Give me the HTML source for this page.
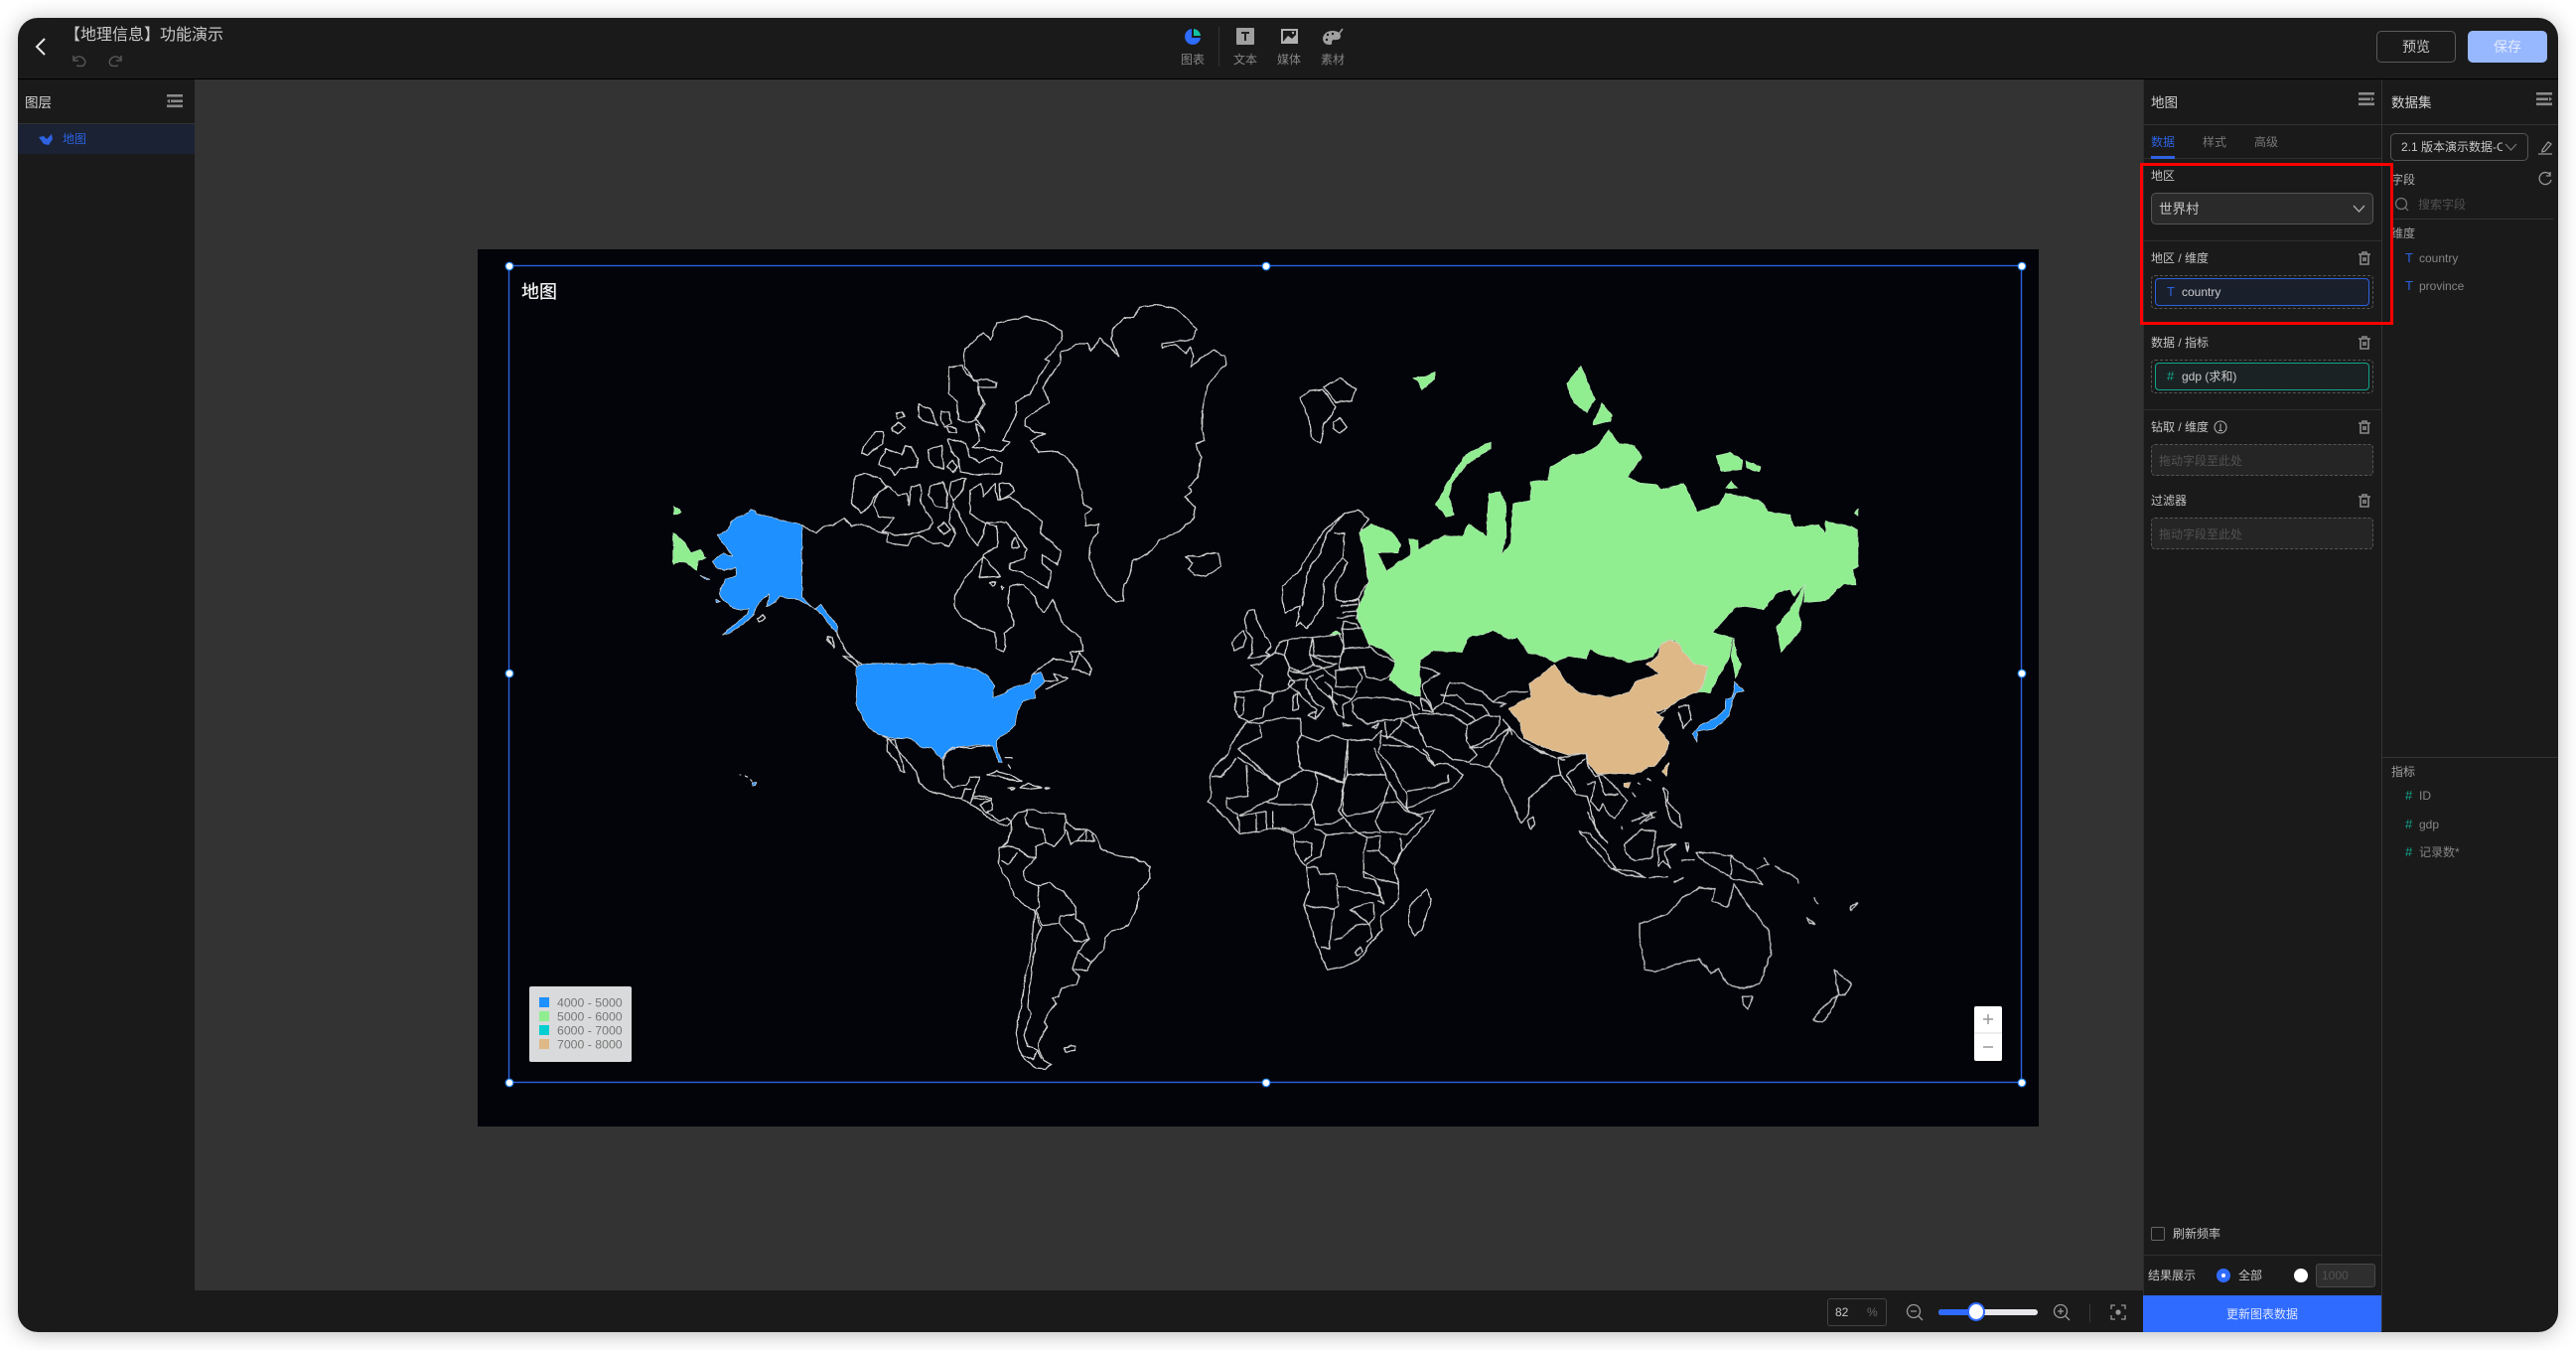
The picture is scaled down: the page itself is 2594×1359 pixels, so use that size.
<!DOCTYPE html>
<html><head><meta charset="utf-8">
<style>
html,body{margin:0;padding:0;background:#fff;width:2594px;height:1359px;overflow:hidden}
body{font-family:"Liberation Sans","Noto Sans CJK SC",sans-serif;position:relative}
#win{position:absolute;left:18px;top:18px;width:2558px;height:1323px;border-radius:20px;box-shadow:0 2px 22px rgba(0,0,0,.28)}
.a{position:absolute}
.t{position:absolute;white-space:nowrap;line-height:20px;height:20px;font-size:12px;color:#c4c4c4;filter:blur(.3px)}
.h{font-size:13.5px;color:#d4d4d4}
.l{font-size:12px;color:#c4c4c4}
.f{font-size:12px;color:#858585}
.p{font-size:12px;color:#525252}
svg{position:absolute;left:0;top:0;overflow:visible}
.dash{position:absolute;border:1px dashed #555;border-radius:4px;box-sizing:border-box}
</style></head><body>
<div id="win"></div>
<div class="a" style="left:18px;top:18px;width:2558px;height:1323px;border-radius:20px;overflow:hidden;background:#1a1a1a">
  <div class="a" style="left:178px;top:62px;width:1962px;height:1219px;background:#333"></div>
  <div class="a" style="left:0;top:61px;width:2558px;height:1px;background:#000"></div>
</div>

<!-- top bar text -->
<div class="t" style="left:65px;top:26px;font-size:16px;color:#c9c9c9">【地理信息】功能演示</div>
<div class="t" style="left:1189px;top:50px;color:#858585">图表</div>
<div class="t" style="left:1242px;top:50px;color:#858585">文本</div>
<div class="t" style="left:1286px;top:50px;color:#858585">媒体</div>
<div class="t" style="left:1330px;top:50px;color:#858585">素材</div>
<div class="a" style="left:1227px;top:27px;width:1px;height:40px;background:#333"></div>
<div class="a" style="left:2393px;top:31px;width:80px;height:32px;box-sizing:border-box;border:1px solid #5a5a5a;border-radius:5px;color:#c8c8c8;font-size:14px;line-height:30px;text-align:center">预览</div>
<div class="a" style="left:2485px;top:31px;width:80px;height:32px;background:#97b7ff;border-radius:5px;color:#e3ebff;font-size:14px;line-height:32px;text-align:center">保存</div>

<!-- left panel -->
<div class="t h" style="left:25px;top:94px">图层</div>
<div class="a" style="left:18px;top:124px;width:178px;height:1px;background:#333"></div>
<div class="a" style="left:18px;top:125px;width:178px;height:30px;background:#1b2233"></div>
<div class="t" style="left:63px;top:130px;color:#2b62e0">地图</div>

<!-- right panel -->
<div class="a" style="left:2158px;top:80px;width:1px;height:1260px;background:#2c2c2c"></div>
<div class="a" style="left:2398px;top:80px;width:1px;height:1260px;background:#333"></div>
<div class="a" style="left:2158px;top:125px;width:418px;height:1px;background:#333"></div>
<div class="t h" style="left:2166px;top:94px">地图</div>
<div class="t h" style="left:2408px;top:94px">数据集</div>
<div class="t" style="left:2166px;top:133px;color:#2e62e0">数据</div>
<div class="t" style="left:2218px;top:133px;color:#777">样式</div>
<div class="t" style="left:2270px;top:133px;color:#777">高级</div>
<div class="a" style="left:2158px;top:159px;width:240px;height:1px;background:#2e2e2e"></div>
<div class="a" style="left:2166px;top:157px;width:24px;height:3px;background:#2e62e0"></div>

<div class="t l" style="left:2166px;top:167px">地区</div>
<div class="a" style="left:2166px;top:194px;width:224px;height:32px;box-sizing:border-box;background:#2a2a2a;border:1px solid #555;border-radius:5px"></div>
<div class="t" style="left:2174px;top:201px;font-size:13.5px;color:#c8c8c8">世界村</div>
<div class="a" style="left:2158px;top:242px;width:240px;height:1px;background:#2e2e2e"></div>

<div class="t l" style="left:2166px;top:250px">地区 / 维度</div>
<div class="dash" style="left:2166px;top:277px;width:224px;height:34px"></div>
<div class="a" style="left:2170px;top:280px;width:216px;height:28px;box-sizing:border-box;border:1.5px solid #2b62e0;border-radius:4px;background:#1a1f2c"></div>
<div class="t" style="left:2182px;top:284px;font-size:13px;color:#2b62e0">T</div>
<div class="t l" style="left:2197px;top:284px;color:#ccc">country</div>

<div class="t l" style="left:2166px;top:335px">数据 / 指标</div>
<div class="dash" style="left:2166px;top:362px;width:224px;height:34px"></div>
<div class="a" style="left:2170px;top:365px;width:216px;height:28px;box-sizing:border-box;border:1.5px solid #12a58a;border-radius:4px;background:#1b2223"></div>
<div class="t" style="left:2182px;top:369px;font-size:13px;color:#12a58a">#</div>
<div class="t l" style="left:2197px;top:369px;color:#ccc">gdp (求和)</div>
<div class="a" style="left:2158px;top:412px;width:240px;height:1px;background:#2e2e2e"></div>

<div class="t l" style="left:2166px;top:420px">钻取 / 维度</div>
<div class="dash" style="left:2166px;top:447px;width:224px;height:32px;background:#252525"></div>
<div class="t p" style="left:2174px;top:454px">拖动字段至此处</div>
<div class="t l" style="left:2166px;top:494px">过滤器</div>
<div class="dash" style="left:2166px;top:521px;width:224px;height:32px;background:#252525"></div>
<div class="t p" style="left:2174px;top:528px">拖动字段至此处</div>

<div class="a" style="left:2166px;top:1235px;width:14px;height:14px;box-sizing:border-box;border:1px solid #666;border-radius:2px"></div>
<div class="t l" style="left:2188px;top:1232px">刷新频率</div>
<div class="a" style="left:2158px;top:1263px;width:240px;height:1px;background:#2e2e2e"></div>
<div class="t l" style="left:2163px;top:1274px">结果展示</div>
<div class="a" style="left:2232px;top:1277px;width:14px;height:14px;border-radius:50%;background:#2f6bff"></div>
<div class="a" style="left:2237px;top:1282px;width:4px;height:4px;border-radius:50%;background:#fff"></div>
<div class="t l" style="left:2254px;top:1274px">全部</div>
<div class="a" style="left:2310px;top:1277px;width:14px;height:14px;border-radius:50%;background:#fff"></div>
<div class="a" style="left:2332px;top:1272px;width:60px;height:24px;box-sizing:border-box;background:#2e2e2e;border:1px solid #484848;border-radius:3px"></div>
<div class="t p" style="left:2338px;top:1274px">1000</div>
<div class="a" style="left:2158px;top:1304px;width:240px;height:37px;background:#2f6bff;color:#dde6ff;font-size:12px;line-height:38px;text-align:center">更新图表数据</div>

<!-- data panel -->
<div class="a" style="left:2407px;top:134px;width:139px;height:28px;box-sizing:border-box;border:1px solid #555;border-radius:5px"></div>
<div class="t" style="left:2418px;top:138px;width:102px;overflow:hidden;color:#c8c8c8">2.1 版本演示数据-CHINA</div>
<div class="t" style="left:2408px;top:171px;color:#b0b0b0">字段</div>
<div class="t p" style="left:2435px;top:196px">搜索字段</div>
<div class="a" style="left:2407px;top:220px;width:164px;height:1px;background:#333"></div>
<div class="t" style="left:2408px;top:225px;color:#a0a0a0">维度</div>
<div class="t" style="left:2422px;top:250px;font-size:13px;color:#2b62e0">T</div>
<div class="t f" style="left:2436px;top:250px">country</div>
<div class="t" style="left:2422px;top:278px;font-size:13px;color:#2b62e0">T</div>
<div class="t f" style="left:2436px;top:278px">province</div>
<div class="a" style="left:2398px;top:762px;width:178px;height:1px;background:#333"></div>
<div class="t" style="left:2408px;top:767px;color:#a0a0a0">指标</div>
<div class="t" style="left:2422px;top:791px;font-size:13px;color:#12a58a">#</div><div class="t f" style="left:2436px;top:791px">ID</div>
<div class="t" style="left:2422px;top:820px;font-size:13px;color:#12a58a">#</div><div class="t f" style="left:2436px;top:820px">gdp</div>
<div class="t" style="left:2422px;top:848px;font-size:13px;color:#12a58a">#</div><div class="t f" style="left:2436px;top:848px">记录数*</div>

<!-- bottom bar -->
<div class="a" style="left:1840px;top:1307px;width:60px;height:28px;box-sizing:border-box;border:1px solid #444;border-radius:3px"></div>
<div class="t" style="left:1848px;top:1311px;color:#c8c8c8">82</div>
<div class="t" style="left:1880px;top:1311px;color:#666">%</div>
<div class="a" style="left:1952px;top:1318px;width:100px;height:6px;border-radius:3px;background:#e8e8ec"></div>
<div class="a" style="left:1952px;top:1318px;width:38px;height:6px;border-radius:3px 0 0 3px;background:#2f6bff"></div>
<div class="a" style="left:1981px;top:1311px;width:18px;height:19px;box-sizing:border-box;border-radius:50%;background:#fff;border:2px solid #2f6bff"></div>
<div class="a" style="left:2104px;top:1313px;width:1px;height:18px;background:#383838"></div>

<!-- artboard -->
<div class="a" style="left:481px;top:251px;width:1572px;height:883px;background:#03040a"></div>
<div class="t" style="left:525px;top:284px;font-size:18px;color:#f2f2f2;font-weight:500">地图</div>

<svg width="2594" height="1359" viewBox="0 0 2594 1359" fill="none">
<defs>
<filter id="rough" filterUnits="userSpaceOnUse" x="640" y="280" width="1260" height="820" color-interpolation-filters="sRGB">
<feTurbulence type="fractalNoise" baseFrequency="0.11" numOctaves="2" seed="4" result="n"/>
<feDisplacementMap in="SourceGraphic" in2="n" scale="3.2" xChannelSelector="R" yChannelSelector="G" result="d"/>
<feGaussianBlur in="d" stdDeviation=".35"/>
</filter>
</defs>
<style>
.m path{vector-effect:non-scaling-stroke;stroke-linejoin:round}
.ln path{stroke:#cfcfcf;stroke-width:1.3}
.bl path{fill:#1e90ff;stroke:#b9c9d8;stroke-width:.8}
.gr path{fill:#90ee90;stroke:#b8e8b8;stroke-width:.6}
.cn path{fill:#deb887;stroke:#d8d0c0;stroke-width:.8}
</style>
<g filter="url(#rough)">
<!-- Z8 North America -->
<g class="m ln" transform="translate(640,290) scale(.3827,.3333)">
<path d="M865,185 L915,135 L935,155 L950,105 L1000,95 L1030,85 L1090,105 L1120,130 L1122,155 L1090,205 L1075,215 L1090,220 L1060,270 L1040,320 L1000,345 L1005,375 L980,430 L965,460 L985,465 L960,495 L920,485 L885,480 L905,460 L895,410 L920,435 L895,395 L915,350 L900,300 L945,300 L948,283 L925,275 L890,280 L865,235 Z"/>
<path d="M825,240 L858,233 L870,260 L900,285 L905,320 L920,350 L895,400 L870,405 L850,395 L845,345 L825,320 Z"/>
<path d="M1115,230 L1120,195 L1160,168 L1190,168 L1198,190 L1220,152 L1250,180 L1272,205 L1252,155 L1255,125 L1285,88 L1312,88 L1325,58 L1365,50 L1425,62 L1478,125 L1465,155 L1385,168 L1385,180 L1420,172 L1447,195 L1460,178 L1468,205 L1460,238 L1490,210 L1522,188 L1550,205 L1553,230 L1525,265 L1505,295 L1490,375 L1490,425 L1498,460 L1472,470 L1488,510 L1480,570 L1455,600 L1465,615 L1445,630 L1470,660 L1470,690 L1460,705 L1430,735 L1380,760 L1350,800 L1310,825 L1300,870 L1285,895 L1283,945 L1265,945 L1240,925 L1220,885 L1195,825 L1195,775 L1215,740 L1218,712 L1185,720 L1185,685 L1200,665 L1180,655 L1160,550 L1130,505 L1100,492 L1060,495 L1040,460 L1078,440 L1050,435 L1025,415 L1025,395 L1090,345 L1070,300 L1090,265 Z"/>
<path d="M1448,810 L1480,812 L1505,800 L1535,802 L1540,840 L1500,872 L1470,865 L1455,850 L1465,830 Z"/>
<path d="M745,350 L775,365 L795,415 L755,400 L745,385 Z M803,372 L825,375 L830,410 L815,420 L805,400 Z M820,420 L845,425 L845,437 L825,435 Z M685,380 L700,375 L708,388 L690,395 Z M675,420 L695,408 L708,420 L690,440 L677,430 Z M600,480 L630,435 L652,435 L650,470 L610,505 L595,497 Z M640,530 L660,485 L700,505 L710,475 L725,480 L745,515 L740,540 L700,545 L680,565 L670,545 L645,535 Z M770,490 L805,475 L810,545 L785,540 L770,515 Z M820,455 L840,460 L870,470 L880,510 L905,525 L940,510 L965,530 L960,560 L905,565 L855,555 L850,520 L830,490 Z M820,540 L835,520 L848,540 L835,557 Z M578,568 L605,562 L645,575 L660,600 L635,620 L610,665 L595,680 L568,650 Z M625,655 L640,615 L665,600 L690,625 L715,620 L720,655 L725,600 L750,595 L752,650 L785,710 L760,735 L700,745 L680,745 L650,735 L680,695 L640,690 Z M775,600 L810,585 L820,620 L820,665 L790,660 L770,625 Z M830,585 L870,575 L860,610 L835,645 L825,620 Z"/>
<path d="M880,610 L910,590 L915,630 L945,590 L955,640 L985,630 L1030,670 L1070,705 L1065,740 L1120,795 L1110,835 L1070,805 L1070,830 L1095,860 L1085,905 L1060,890 L1020,860 L985,850 L985,830 L1020,820 L1030,790 L1000,740 L975,705 L920,710 L880,680 Z"/>
<path d="M958,590 L985,590 L998,615 L960,640 Z M795,725 L810,705 L830,730 L810,745 Z M990,765 L1000,755 L1010,780 L992,785 Z M930,890 L948,885 L940,900 Z M962,900 L970,905 L965,912 Z"/>
<path d="M438,715 L475,740 L495,720 L520,715 L548,695 L570,720 L595,712 L630,730 L665,745 L660,770 L715,778 L725,755 L745,745 L780,772 L805,770 L825,780 L842,740 L825,705 L835,650 L860,705 L875,740 L900,780 L915,745 L920,710 L950,720 L952,780 L915,805 L905,875 L960,870 L930,830 L915,810"/>
<path d="M915,810 L870,870 L840,930 L838,965 L860,995 L900,1020 L945,1040 L950,1085 L968,1100 L975,1085 L970,1040 L995,1020 L990,985 L980,960 L985,900 L1020,895 L1050,930 L1060,965 L1075,980 L1098,940 L1125,1015 L1170,1055 L1178,1095 L1145,1100 L1150,1130 L1100,1120 L1060,1150 L1045,1165"/>
<path d="M530,1040 L550,1090 L572,1120 L595,1135 M505,1052 L518,1055 L522,1085 L505,1065 Z M548,1110 L570,1115 L595,1150 L575,1140 Z"/>
<path d="M1080,1210 L1140,1180 L1100,1165 L1110,1185 L1075,1190 M1150,1150 L1170,1100 L1200,1150 L1195,1170 L1170,1155 Z"/>
<path d="M320,1000 L335,985 L340,995 L325,1008 Z M505,1055 L515,1075"/>
</g>
<g class="m bl" transform="translate(640,290) scale(.3827,.3333)">
<path d="M438,715 L438,935 L470,970 L488,955 L505,985 L532,1022 L530,1040 L505,1010 L490,985 L465,965 L435,945 L378,930 L370,948 L345,962 L352,925 L340,935 L325,950 L310,985 L285,1015 L250,1040 L230,1048 L260,1015 L295,985 L300,968 L265,970 L255,965 L235,945 L220,925 L225,905 L238,880 L262,870 L265,845 L235,852 L215,845 L203,825 L232,800 L255,812 L245,790 L225,765 L215,745 L240,735 L250,710 L270,690 L295,678 L305,668 L320,683 L345,690 L385,700 L415,708 Z"/>
<path d="M170,868 L195,880 L185,880 Z M210,940 L225,945 L215,950 Z"/>
<path d="M595,1135 L835,1135 L850,1140 L895,1150 L925,1170 L945,1200 L940,1238 L970,1225 L985,1210 L1035,1190 L1045,1165 L1068,1160 L1075,1190 L1050,1220 L1050,1238 L1020,1250 L1005,1280 L1000,1320 L975,1345 L950,1365 L950,1385 L965,1435 L955,1435 L940,1385 L900,1380 L850,1385 L815,1405 L808,1425 L780,1390 L750,1385 L725,1362 L680,1360 L645,1350 L615,1330 L595,1295 L580,1255 L582,1200 L580,1145 Z"/>
</g>
<g class="m gr" transform="translate(640,290) scale(.3827,.3333)">
<path d="M99,660 L115,665 L122,675 L110,683 L99,684 Z M99,738 L130,770 L145,800 L170,790 L187,815 L165,825 L162,855 L135,830 L115,825 L100,835 Z"/>
</g>
<!-- Z11 Latin America -->
<g class="m ln" transform="translate(720,720) scale(.3333)">
<path d="M520,72 L545,75 L570,160 L575,172 L560,165 L540,130 L520,110 Z"/>
<path d="M505,62 L525,70 L555,105 L580,140 L610,170 L618,205 L650,230 L710,245 L745,250 L770,268 L800,285 L820,305 L860,328 L885,335 L895,320 L880,310 L860,320 L840,305 L820,295 L838,285 L835,250 L800,242 L780,245 L785,225 L800,185 L770,188 L760,210 L720,218 L695,195 L690,150 L695,115 L720,97 L770,98 L830,92"/>
<path d="M745,250 L755,225 L775,225 M770,268 L780,245 M775,250 L835,255 M800,270 L835,255 M820,295 L800,270"/>
<path d="M820,180 L850,168 L890,178 L925,200 L890,195 L860,185 Z M925,218 L945,205 L985,218 L945,222 Z M885,220 L905,220 L895,226 Z M995,218 L1012,220 L1000,223 Z M878,128 L898,128 M885,150 L893,160"/>
<path d="M895,320 L915,295 L945,285 L965,285 L985,295 L1055,298 L1060,320 L1090,345 L1125,345 L1150,362 L1165,402 L1220,425 L1270,432 L1315,458 L1315,495 L1280,535 L1275,580 L1250,635 L1195,655 L1180,675 L1175,705 L1135,750 L1125,770 L1100,770 L1080,765 L1100,790 L1090,815 L1045,825 L1040,848 L1020,855 L1030,870 L1005,905 L995,925 L1005,940 L975,990 L980,1012 L990,1040 L1015,1055 L1000,1068 L970,1065 L935,1040 L915,1000 L910,960 L915,925 L925,880 L935,800 L955,720 L965,590 L935,575 L905,545 L880,490 L855,450 L860,400 L885,385 L895,350 Z"/>
<path d="M945,285 L935,310 L950,335 L990,345 L1000,385 L1025,395 L1055,360 L1060,320 M1000,385 L970,395 L970,430 L930,470 L940,500 L975,515 L1010,505 L1060,540 L1090,580 L1088,615 L1115,630 L1130,675 L1110,685 L1085,680 L1040,630 L1042,605 L1085,600 M1060,345 L1075,390 L1095,380 L1125,345 M1125,345 L1120,378 L1095,380 M1140,358 L1145,380 L1120,378"/>
<path d="M860,400 L885,395 L920,405 L945,428 L970,430 M865,440 L885,450 L915,415 M975,515 L980,580 L970,590 L990,635 L1040,630 M965,590 L985,640 L970,680 L962,740 L950,830 L945,880 L955,900 L935,965 L945,1000 L975,1012 L960,1040 L925,1025 M1130,675 L1095,715 L1085,750 L1080,765 M1095,715 L1135,745 M975,1012 L985,1040"/>
<path d="M1055,1005 L1075,998 L1090,1000 L1088,1012 L1060,1015 Z M75,178 L80,181 M92,185 L100,188 M105,192 L112,198"/>
</g>
<g class="m bl" transform="translate(720,720) scale(.3333)"><path d="M112,202 L124,204 L122,212 L114,212 Z"/></g>
<!-- Z12 Europe Africa Asia -->
<g class="m ln" transform="translate(1210,600) scale(.3333)">
<path d="M140,45 L160,42 L165,70 L180,100 L200,130 L210,155 L195,170 L205,180 L140,188 L155,170 L150,150 L155,125 L135,105 L130,70 Z M100,130 L125,105 L135,125 L125,155 L98,165 L95,140 Z"/>
<path d="M100,290 L175,285 L215,295 L215,315 L190,340 L185,365 L140,378 L115,365 L100,345 L105,310 Z M105,305 L128,305 L125,355 L110,365"/>
<path d="M150,210 L175,205 L220,170 L250,180 L265,215 L262,240 L280,260 L260,280 L215,295 L175,285 L185,240 Z M220,170 L235,140 L260,130"/>
<path d="M250,180 L262,130 L335,125 L325,175 L340,205 L300,230 L265,215 Z M335,125 L415,115 L430,150 L420,185 L340,180 Z M425,100 L500,95 L515,130 L505,155 L430,160 Z M420,185 L430,160 L510,155 L535,175 L590,200 L570,240 L540,255 L500,245 L490,215 L415,220 Z M325,175 L375,200 L410,205 L380,215 L310,235 L265,225 M405,225 L470,215 L485,245 L470,275 L405,275 Z M325,240 L350,275 L395,315 L410,360 L430,370 L425,330 L455,310 L470,290 L470,275 M370,260 L395,275 L395,315 M395,290 L455,310 M335,205 L375,225 L405,250 M345,250 L370,240 M385,300 L410,330 M425,100 L430,75 L470,85 L475,100 M410,65 L465,60 M420,30 L470,25 M425,50 L470,45"/>
<path d="M265,255 L320,250 L315,280 L345,325 L370,340 L345,370 L345,345 L310,310 L290,290 L262,270 Z M320,358 L345,350 L345,372 Z M278,300 L290,295 L292,340 L275,345 Z"/>
<path d="M455,320 L470,310 L540,305 L630,318 L640,360 L600,370 L555,375 L505,385 L470,370 L458,350 Z M515,395 L535,385 L525,400 Z M425,385 L455,390 L430,392 Z M630,318 L660,340 M600,370 L640,400 L655,400 M555,380 L560,430 M545,405 L535,470"/>
<path d="M135,380 L175,385 L225,370 L275,368 L300,370 L300,420 L355,440 L395,420 L440,435 L515,435 L545,405 M135,380 L100,430 L80,480 L40,510 L25,545 L30,600 L20,620 L50,650 L75,670 L115,720 L160,712 L230,700 L275,720 L282,745 L285,780 L315,815 L325,890 L310,935 L345,1045 L380,1130 L430,1120 L475,1100 L510,1050 L545,1010 L540,970 L595,915 L595,870 L582,820 L605,770 L645,725 L685,680 L703,645 L660,660 L630,655 L620,640 L600,620 L565,560 L520,460"/>
<path d="M175,390 L180,425 L110,460 L230,570 L310,525 L295,515 L290,440 L300,420 M30,545 L60,545 L105,490 M135,510 L140,605 L75,610 M110,485 L235,570 L230,605 L195,620 L140,650 L115,665 M310,525 L350,535 L430,565 L425,610 L415,650 L430,670 L390,690 L345,690 L330,630 L350,580 L345,535 M345,530 L430,563 L440,435 M440,435 L440,540 L555,540 M440,540 L430,565 L425,650 L440,665 L520,650 L550,620 L570,560 M195,620 L230,630 L330,630 L340,665 L310,700 L280,715 L240,700 M75,610 L75,640 L110,660 L115,715 M165,655 L165,710 M195,650 L195,705 M215,650 L215,700 M115,665 L195,650"/>
<path d="M550,625 L590,620 L620,650 L670,670 L620,720 L540,710 L525,680 L550,625 M430,670 L470,715 L540,715 M340,700 L380,720 L470,715 L500,730 L490,775 L490,850 L525,860 L540,905 L520,900 L490,895 L410,875 L405,840 L360,840 L350,820 L318,820 M285,740 L335,745 L330,785 L310,800 M375,720 L360,785 L315,810 M600,730 L605,770 L580,810 L535,770 L500,770 M500,730 L540,725 L535,770 M490,830 L530,855 L595,870 M520,855 L535,880 L550,930 L535,920 M315,935 L400,945 L415,938 L410,880 M400,945 L390,1040 L385,1065 L360,1060 M400,1040 L440,1020 L465,995 L505,990 L450,945 M450,945 L480,935 L520,925 L520,975 L505,990 M505,990 L515,1030 L500,1045 M462,1075 L478,1060 L485,1072 L470,1085 Z M630,935 L680,885 L695,915 L665,1010 L640,1025 L625,990 Z"/>
<path d="M545,420 L580,430 L640,455 L675,480 L700,510 L745,505 L790,540 L760,580 L710,600 L640,635 L620,640 L620,600 L575,520 L535,470 M620,590 L710,575 L745,560 L745,540 M545,450 L640,455 M560,430 L600,390 L610,370 M670,460 L690,490 L705,515"/>
<path d="M640,360 L670,355 L700,355 L760,360 L800,390 L800,440 L830,480 L810,500 L760,495 L720,465 L680,455 L655,400 Z M800,390 L860,360 L900,365 L900,390 L870,430 L810,460 M810,460 L850,455 L930,400 L910,370 M930,400 L885,490 L870,515 L810,505 M660,310 L680,320 L700,350 L670,345 Z M660,210 L720,235 L690,250 L665,270 L680,310 L700,345 L730,320 L750,260 L790,265 L850,290 L880,320 L930,290 L985,290 M720,300 L770,300 L800,325 L850,330 L870,360 M880,320 L920,325 L900,335 M730,320 L790,345 L830,375"/>
<path d="M885,490 L870,515 L900,545 L925,595 L965,685 L985,665 L990,610 L1060,545 L1085,540 L1075,490 L1100,495 M935,420 L930,400 L975,440 L1070,490 M985,680 L1000,665 L1008,690 L995,705 Z M990,455 L1060,485"/>
<path d="M1085,540 L1110,570 L1130,600 L1165,605 L1175,640 L1190,700 L1225,745 L1195,710 L1165,650 M1160,490 L1105,540 L1130,590 M1075,490 L1160,475 L1170,520 L1190,545 L1210,540 L1245,570 L1285,620 L1250,670 L1230,660 L1210,625 L1200,650 L1175,620 L1190,560 L1165,570 M1200,545 L1220,600 L1260,600"/>
<path d="M1440,335 L1470,330 L1480,370 L1455,400 L1440,350 M1370,345 L1395,325 L1400,345 L1375,365 Z"/>
<path d="M1140,710 L1175,720 L1220,770 L1250,820 L1240,825 L1190,770 Z M1245,825 L1300,830 L1340,850 L1270,840 Z M1275,750 L1330,705 L1375,710 L1360,790 L1310,800 L1285,780 Z M1380,760 L1435,750 L1400,770 L1415,820 L1395,800 L1380,815 Z M1395,580 L1410,590 L1405,620 L1445,660 L1450,700 L1420,680 L1405,640 Z M1450,800 L1490,795 M1350,850 L1410,848 M1425,865 L1455,850 M1300,680 L1375,650 M1320,690 L1360,660 M1340,680 L1370,670 M1300,595 L1312,605 M1460,745 L1470,745 L1470,770 Z M1270,695 L1272,705 M1330,655 L1345,665 M1355,650 L1362,672 M1320,565 L1328,570 M1345,550 L1358,558"/>
</g>
<!-- Z9 Eurasia top -->
<g class="m ln" transform="translate(1200,340) scale(.4464,.3333)">
<path d="M205,750 L245,700 L275,630 L300,580 L345,530 L375,520 L398,545 L380,590 L390,650 L398,735 L378,785 L345,800 L325,790 L325,745 L352,680 L340,665 L300,730 L295,810 L260,880 L245,860 L235,870 L245,810 L210,830 L205,790 Z M345,530 L305,590 L290,650 L260,710 L250,810 M340,665 L345,590 L320,590 M340,800 L378,790 L372,850"/>
<path d="M245,180 L265,160 L295,155 L325,210 L300,260 L290,320 L270,300 L265,250 Z M298,150 L335,122 L370,155 L360,190 L325,195 Z M320,255 L335,243 L350,270 L335,290 L320,275 Z"/>
</g>
<g class="m gr" transform="translate(1200,340) scale(.4464,.3333)">
<path d="M378,590 L405,562 L450,585 L472,625 L465,650 L420,650 L440,705 L465,680 L495,655 L490,610 L512,610 L510,640 L570,595 L610,600 L625,562 L665,600 L670,470 L695,465 L708,500 L710,600 L700,655 L720,620 L725,500 L765,490 L765,435 L805,430 L810,390 L860,350 L885,350 L915,325 L940,280 L965,320 L1000,325 L1015,360 L985,420 L1010,440 L1050,445 L1060,460 L1110,440 L1125,480 L1140,525 L1190,505 L1205,470 L1280,490 L1300,525 L1350,535 L1360,572 L1415,565 L1430,590 L1430,555 L1490,570 L1503,580 L1503,690 L1490,700 L1500,745 L1470,745 L1430,795 L1380,800 L1385,745 L1360,780 L1350,760 L1320,770 L1290,820 L1230,810 L1175,890 L1220,905 L1215,960 L1170,1070 L1140,1070 L1140,1010 L1105,950 L1090,915 L1060,925 L1040,965 L1010,975 L985,980 L950,965 L925,960 L900,940 L890,970 L850,960 L820,980 L780,955 L760,955 L735,905 L715,910 L680,885 L625,905 L610,950 L545,945 L515,975 L515,1085 L490,1075 L445,1035 L460,975 L430,940 L400,925 L375,850 L372,820 L385,790 L398,735 L390,650 Z"/>
<path d="M312,895 L325,885 L338,897 Z M550,505 L575,440 L620,350 L675,315 L675,335 L620,385 L590,435 L580,480 L592,535 L575,540 Z M845,140 L878,85 L910,185 L890,225 L860,195 Z M905,265 L925,195 L948,235 L945,250 Z M500,122 L530,115 L548,105 L548,125 L520,158 L510,130 Z M1183,355 L1215,345 L1243,370 L1240,398 L1195,405 Z M1250,372 L1285,390 L1280,405 L1255,395 Z M1205,455 L1218,432 L1232,455 Z M1495,530 L1503,515 L1503,538 Z M1320,875 L1350,820 L1385,745 L1370,830 L1375,880 L1330,950 Z M1222,905 L1228,960 L1240,985 L1228,1030 L1218,960 Z"/>
</g>
<g class="m cn" transform="translate(1200,340) scale(.4464,.3333)">
<path d="M818,985 L845,1040 L880,1075 L945,1085 L990,1070 L1000,1040 L1055,1015 L1025,985 L1050,965 L1060,925 L1078,912 L1100,925 L1110,950 L1135,985 L1165,995 L1155,1040 L1140,1070 L1105,1090 L1070,1120 L1045,1130 L1065,1150 L1050,1175 L1075,1220 L1070,1255 L1045,1290 L1000,1318 L950,1315 L915,1320 L895,1285 L890,1255 L850,1260 L800,1240 L750,1210 L740,1160 L715,1120 L765,1085 L760,1045 L800,1010 Z"/>
<path d="M1060,1310 L1075,1285 L1070,1325 Z M975,1345 L990,1340 L985,1360 L975,1355 Z"/>
</g>
<g class="m bl" transform="translate(1200,340) scale(.4464,.3333)">
<path d="M1220,1085 L1225,1040 L1245,1065 L1225,1075 L1215,1125 L1215,1140 L1180,1180 L1140,1190 L1140,1220 L1128,1195 L1150,1170 L1180,1150 L1205,1120 L1205,1090 Z"/>
</g>
<!-- Z10 Oceania -->
<g class="m ln" transform="translate(1000,780) scale(.6378,.3333)">
<path d="M1020,450 L1065,420 L1090,370 L1115,340 L1140,345 L1135,380 L1160,400 L1170,330 L1195,400 L1225,470 L1228,540 L1210,630 L1185,645 L1160,635 L1145,585 L1135,600 L1115,555 L1075,575 L1045,595 L1030,590 L1020,490 Z"/>
<path d="M1182,668 L1200,668 L1192,708 L1185,695 Z M1328,590 L1355,630 L1345,665 L1335,665 L1320,720 L1310,748 L1295,740 L1310,700 L1335,665 L1330,610 Z"/>
<path d="M1110,235 L1130,235 L1165,245 L1195,285 L1215,330 L1170,315 L1130,270 L1115,250 Z M1165,245 L1165,305 M1215,250 L1225,270 L1205,285 M1235,275 L1270,315 L1272,330 M1297,370 L1302,392 M1285,430 L1298,450 L1290,450 Z M1355,395 L1365,388 L1355,410 Z"/>
</g>
</g>

<!-- selection -->
<rect x="512.5" y="267.5" width="1523" height="822" stroke="#2b62e0" stroke-width="1.4"/>
<g fill="#fff" stroke="#2b8fff" stroke-width="1.2">
<circle cx="513" cy="268" r="3.8"/><circle cx="1275" cy="268" r="3.8"/><circle cx="2036" cy="268" r="3.8"/>
<circle cx="513" cy="678" r="3.8"/><circle cx="2036" cy="678" r="3.8"/>
<circle cx="513" cy="1090" r="3.8"/><circle cx="1275" cy="1090" r="3.8"/><circle cx="2036" cy="1090" r="3.8"/>
</g>

<!-- top icons -->
<path d="M45 39 L37 47 L45 55" stroke="#e8e8e8" stroke-width="2"/>
<g stroke="#555" stroke-width="1.5"><path d="M74 56 L74 61 L79 61 M74 60 Q79 55 83 58 Q88 62 84 66 Q81 67 77 66"/><path d="M122 56 L122 61 L117 61 M122 60 Q117 55 113 58 Q108 62 112 66 Q115 67 119 66"/></g>
<path d="M1200 29 A8 8 0 1 0 1209 38 L1200 38 Z" fill="#2e6bff"/>
<path d="M1202 29 A8 8 0 0 1 1209 36 L1202 36 Z" fill="#12c2a2"/>
<rect x="1245" y="28" width="18" height="17" rx="1" fill="#a0a0a0"/><path d="M1250 33 H1258 M1254 33 V41" stroke="#222" stroke-width="2"/>
<rect x="1290" y="29" width="17" height="15" fill="#b0b0b0"/><rect x="1292" y="31" width="13" height="11" fill="#1a1a1a"/><path d="M1292 42 L1297 36 L1301 39 L1305 35 V42 Z" fill="#b0b0b0"/><circle cx="1302" cy="33" r="1.2" fill="#b0b0b0"/>
<path d="M1342 31 Q1334 31 1332 38 Q1332 45 1339 45 Q1342 45 1341 42 Q1342 39 1346 40 Q1350 40 1350 36 Q1349 31 1342 31 Z" fill="#a0a0a0"/>
<path d="M1344 40 L1352 29" stroke="#a0a0a0" stroke-width="1.5"/>
<g fill="#1a1a1a"><circle cx="1337" cy="35" r="1.2"/><circle cx="1342" cy="34" r="1.2"/><circle cx="1336" cy="40" r="1.2"/></g>

<!-- menu icons -->
<g fill="#8a8a8a"><rect x="168" y="95" width="16" height="2.6"/><rect x="172" y="100.500" width="12" height="2.6"/><rect x="168" y="105.500" width="16" height="2.6"/><path d="M168 101.800 L171 99.500 V104.100 Z"/>
<rect x="2375" y="93" width="16" height="2.6"/><rect x="2375" y="98.500" width="12" height="2.6"/><rect x="2375" y="103.500" width="16" height="2.6"/><path d="M2391 99.800 L2388 97.500 V102 Z"/>
<rect x="2554" y="93" width="16" height="2.6"/><rect x="2554" y="98.500" width="12" height="2.6"/><rect x="2554" y="103.500" width="16" height="2.6"/><path d="M2570 99.800 L2567 97.500 V102 Z"/></g>
<path d="M39 138 L44 137 L47 140 L52 135 L53 140 L49 146 L44 145 Z" fill="#2e62e0"/>

<!-- select chevrons -->
<path d="M2370 207 L2375.5 213 L2381 207" stroke="#aaa" stroke-width="1.3"/>
<path d="M2523 145 L2528.500 151 L2534 145" stroke="#777" stroke-width="1.2"/>

<!-- trash -->
<g stroke="#8a8a8a" stroke-width="1.6"><path d="M2375 256 H2387 M2379 256 V254 H2383 V256 M2377 256 V266 H2385 V256 M2380 259 V263 M2382 259 V263"/>
<path d="M2375 341 H2387 M2379 341 V339 H2383 V341 M2377 341 V351 H2385 V341 M2380 344 V348 M2382 344 V348"/>
<path d="M2375 426 H2387 M2379 426 V424 H2383 V426 M2377 426 V436 H2385 V426 M2380 429 V433 M2382 429 V433"/>
<path d="M2375 500 H2387 M2379 500 V498 H2383 V500 M2377 500 V510 H2385 V500 M2380 503 V507 M2382 503 V507"/></g>
<circle cx="2236" cy="430" r="6" stroke="#aaa" stroke-width="1.1"/><path d="M2236 426.500 V433 M2234 433.500 H2238" stroke="#aaa" stroke-width="1.1"/>

<!-- data panel icons -->
<g stroke="#999" stroke-width="1.3"><path d="M2560 151 L2566 143 L2569 145 L2563 152 L2560 153 Z M2556 155 H2570"/>
<path d="M2568 176 A6 6 0 1 0 2569 181 M2568 173 V177 H2564"/></g>
<circle cx="2418" cy="205" r="5.500" stroke="#777" stroke-width="1.200"/><path d="M2422 209 L2425 212" stroke="#777" stroke-width="1.200"/>

<!-- bottom icons -->
<g stroke="#999" stroke-width="1.300"><circle cx="1927" cy="1320" r="6.500"/><path d="M1924 1320 H1930 M1932 1325 L1936 1329"/>
<circle cx="2075" cy="1320" r="6.500"/><path d="M2072 1320 H2078 M2075 1317 V1323 M2080 1325 L2084 1329"/>
<path d="M2126 1318 V1314 H2130 M2136 1314 H2140 V1318 M2140 1324 V1328 H2136 M2130 1328 H2126 V1324"/></g>
<circle cx="2133" cy="1321" r="2.600" fill="#999"/>

<!-- legend -->
<rect x="533" y="993" width="103" height="76" rx="2" fill="#d9dadb"/>
<rect x="543" y="1004" width="10" height="10" fill="#1e90ff"/><rect x="543" y="1018" width="10" height="10" fill="#90ee90"/><rect x="543" y="1032" width="10" height="10" fill="#00ced1"/><rect x="543" y="1046" width="10" height="10" fill="#deb887"/>
<g font-family="Liberation Sans" font-size="12.300" fill="#777"><text x="561" y="1013.500">4000 - 5000</text><text x="561" y="1027.500">5000 - 6000</text><text x="561" y="1041.500">6000 - 7000</text><text x="561" y="1055.500">7000 - 8000</text></g>

<!-- zoom control -->
<rect x="1988" y="1013" width="28" height="55" rx="2" fill="#fff"/><path d="M1988 1040 H2016" stroke="#ddd"/>
<path d="M1997 1026 H2007 M2002 1021 V1031 M1997 1054 H2007" stroke="#999" stroke-width="1.500"/>

<!-- red annotation -->
<rect x="2156.500" y="165.500" width="252" height="160" stroke="#f00" stroke-width="3"/>
</svg>
</body></html>
